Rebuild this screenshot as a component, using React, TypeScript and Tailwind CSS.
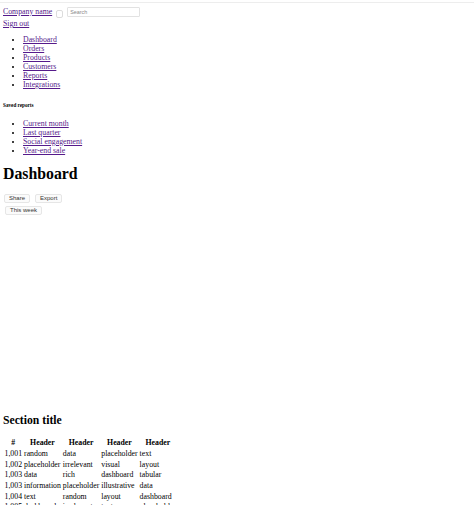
import React from 'react';

const navLinks = ['Dashboard', 'Orders', 'Products', 'Customers', 'Reports', 'Integrations'];
const savedReports = ['Current month', 'Last quarter', 'Social engagement', 'Year-end sale'];

const rows: string[][] = [
  ['1,001', 'random', 'data', 'placeholder', 'text'],
  ['1,002', 'placeholder', 'irrelevant', 'visual', 'layout'],
  ['1,003', 'data', 'rich', 'dashboard', 'tabular'],
  ['1,003', 'information', 'placeholder', 'illustrative', 'data'],
  ['1,004', 'text', 'random', 'layout', 'dashboard'],
  ['1,005', 'dashboard', 'irrelevant', 'text', 'placeholder'],
];

const linkCls = 'text-[#551a8b] underline';
const btnCls =
  "h-[9px] px-[4px] flex items-center bg-[#fbfbfb] border border-[#e6e6e6] rounded-[2px] text-[6px] leading-none text-[#333] font-['Liberation_Sans',Arial,sans-serif]";

export default function App() {
  return (
    <div className="min-h-[505px] bg-white text-black font-['Liberation_Serif','Times_New_Roman',serif] text-[7.8px] leading-[9px]">
      {/* thin top rule */}
      <div className="h-px mt-[2px] bg-[#ededed]" />

      <div className="px-[3px]">
        {/* Header */}
        <div className="flex items-start">
          <a href="#" className={`${linkCls} mt-[4px]`}>Company name</a>
          <button className="ml-[4px] mt-[7px] w-[7px] h-[8px] bg-white border border-[#dcdcdc] rounded-[2px]" aria-label="Toggle navigation" />
          <input
            type="text"
            placeholder="Search"
            className="ml-[4px] mt-[4px] w-[73px] h-[10px] px-[2px] bg-white border border-[#e2e2e2] rounded-[1px] text-[5.4px] placeholder:text-[#8a8a8a] outline-none font-['Liberation_Sans',Arial,sans-serif]"
          />
        </div>
        <div className="mt-[1px]">
          <a href="#" className={linkCls}>Sign out</a>
        </div>

        {/* Sidebar */}
        <ul className="list-disc pl-[20px] mt-[7px] mb-[8px]">
          {navLinks.map((l) => (
            <li key={l}>
              <a href="#" className={linkCls}>{l}</a>
            </li>
          ))}
        </ul>
        <h6 className="text-[5.2px] leading-[6px] font-bold mt-[12.5px] mb-[11px]">Saved reports</h6>
        <ul className="list-disc pl-[20px]">
          {savedReports.map((l) => (
            <li key={l}>
              <a href="#" className={linkCls}>{l}</a>
            </li>
          ))}
        </ul>

        {/* Main */}
        <h1 className="text-[15.8px] leading-[18px] font-bold my-[10.5px]">Dashboard</h1>
        <div className="pl-[1px]">
          <div className="flex gap-[5px]">
            <button className={btnCls}>Share</button>
            <button className={btnCls}>Export</button>
          </div>
          <div className="flex mt-[3px] ml-[1px]">
            <button className={btnCls}>This week</button>
          </div>
        </div>

        {/* chart area */}
        <div className="h-[190px]" />

        <h2 className="text-[11.7px] leading-[13.5px] font-bold mt-[9.7px] mb-[10px]">Section title</h2>
        <table className="border-separate border-spacing-[1px]">
          <thead>
            <tr>
              {['#', 'Header', 'Header', 'Header', 'Header'].map((h, i) => (
                <th key={i} className="px-[0.5px] py-[0.5px] leading-[8.7px] font-bold text-center">{h}</th>
              ))}
            </tr>
          </thead>
          <tbody>
            {rows.map((r, i) => (
              <tr key={i}>
                {r.map((c, j) => (
                  <td key={j} className="px-[0.5px] py-[0.5px] leading-[8.7px] whitespace-nowrap">{c}</td>
                ))}
              </tr>
            ))}
          </tbody>
        </table>
      </div>
    </div>
  );
}
